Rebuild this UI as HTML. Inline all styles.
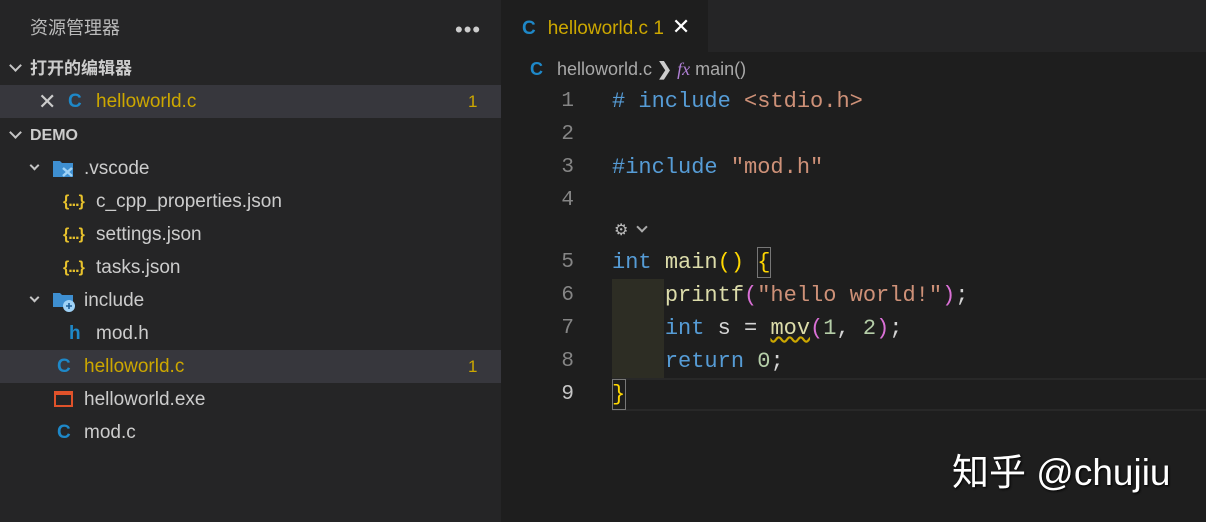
<!DOCTYPE html>
<html><head><meta charset="utf-8">
<style>
*{margin:0;padding:0;box-sizing:border-box}
body{width:1206px;height:522px;overflow:hidden;background:#1e1e1e;font-family:"Liberation Sans","Noto Sans CJK SC",sans-serif;position:relative}
#side{position:absolute;left:0;top:0;width:501px;height:522px;background:#252526}
.row{position:absolute;left:0;width:501px;height:33px;line-height:33px;font-size:19px;color:#cccccc;white-space:nowrap}
.row span{position:absolute}
.sel{background:#37373d}
.y{color:#cca700}
.cic{color:#1e88c8;font-weight:bold;font-size:19px}
.json{color:#e8c22c;font-size:16px;font-weight:bold;letter-spacing:-1px}
.chev{position:absolute;width:9px;height:9px;border-right:2px solid #c5c5c5;border-bottom:2px solid #c5c5c5;transform:rotate(45deg)}
#tabbar{position:absolute;left:501px;top:0;width:705px;height:52px;background:#252526}
#tab{position:absolute;left:501px;top:0;width:207px;height:52px;background:#1e1e1e}
.code{position:absolute;left:612px;font-family:"Liberation Mono",monospace;font-size:22px;height:33px;line-height:33px;white-space:pre;color:#d4d4d4}
.ln{position:absolute;left:540px;width:34px;text-align:right;font-family:"Liberation Mono",monospace;font-size:21px;color:#858585;height:33px;line-height:33px}
.kw{color:#569cd6}.st{color:#ce9178}.fn{color:#dcdcaa}.nu{color:#b5cea8}.br1{color:#ffd700}.br2{color:#da70d6}.pl{color:#d4d4d4}
</style></head><body>
<div id="side">
 <div class="row" style="top:12px;font-size:18px"><span style="left:30px;color:#bbbbbb">资源管理器</span><span style="left:455px;color:#ccc;font-size:22px;letter-spacing:1px;top:1px">•••</span></div>
 <div class="row" style="top:52px;font-size:17px;font-weight:bold"><i class="chev" style="left:11px;top:9px"></i><span style="left:30px;color:#cccccc">打开的编辑器</span></div>
 <div class="row sel" style="top:85px"><span style="left:38px;color:#ccc;font-size:22px">✕</span><span class="cic" style="left:68px">C</span><span class="y" style="left:96px">helloworld.c</span><span class="y" style="left:468px;font-size:17px">1</span></div>
 <div class="row" style="top:119px;font-size:16px;font-weight:bold"><i class="chev" style="left:11px;top:9px"></i><span style="left:30px">DEMO</span></div>
 <div class="row" style="top:152px"><i class="chev" style="left:31px;top:10px;width:7px;height:7px"></i>
  <svg style="position:absolute;left:52px;top:7px" width="24" height="20" viewBox="0 0 24 20"><path d="M1 2h7l2 2h11v14H1z" fill="#3e8fd1"/><path d="M11 9l9 8M20 9l-9 8" stroke="#9fd2f6" stroke-width="2.5"/></svg>
  <span style="left:84px">.vscode</span></div>
 <div class="row" style="top:185px"><span class="json" style="left:63px">{...}</span><span style="left:96px">c_cpp_properties.json</span></div>
 <div class="row" style="top:218px"><span class="json" style="left:63px">{...}</span><span style="left:96px">settings.json</span></div>
 <div class="row" style="top:251px"><span class="json" style="left:63px">{...}</span><span style="left:96px">tasks.json</span></div>
 <div class="row" style="top:284px"><i class="chev" style="left:31px;top:10px;width:7px;height:7px"></i>
  <svg style="position:absolute;left:52px;top:7px" width="24" height="22" viewBox="0 0 24 22"><path d="M1 2h7l2 2h11v12H1z" fill="#3e8fd1"/><circle cx="17" cy="15" r="6" fill="#9fd2f6"/><path d="M17 12v6M14 15h6" stroke="#1e5f99" stroke-width="1.6"/></svg>
  <span style="left:84px">include</span></div>
 <div class="row" style="top:317px"><span style="left:69px;color:#1e88c8;font-weight:bold">h</span><span style="left:96px">mod.h</span></div>
 <div class="row sel" style="top:350px"><span class="cic" style="left:57px">C</span><span class="y" style="left:84px">helloworld.c</span><span class="y" style="left:468px;font-size:17px">1</span></div>
 <div class="row" style="top:383px"><span style="left:54px;top:8px;width:19px;height:16px;border:2px solid #e0522a;border-top-width:4px"></span><span style="left:84px">helloworld.exe</span></div>
 <div class="row" style="top:416px"><span class="cic" style="left:57px">C</span><span style="left:84px">mod.c</span></div>
</div>
<div id="tabbar"></div>
<div id="tab"></div>
<div style="position:absolute;left:522px;top:12px;font-size:19px;line-height:30px;white-space:nowrap"><span class="cic">C</span><span class="y" style="margin-left:12px">helloworld.c 1</span><span style="color:#fff;margin-left:8px;font-size:22px">✕</span></div>
<div style="position:absolute;left:530px;top:55px;font-size:18px;line-height:28px;white-space:nowrap;color:#a9a9a9"><span class="cic" style="font-size:18px">C</span><span style="margin-left:14px">helloworld.c</span><span style="color:#ccc;font-weight:bold"> ❯ </span><span style="color:#b180d7;font-style:italic;font-family:'Liberation Serif',serif">fx</span> main()</div>

<div style="position:absolute;left:612px;top:279px;width:52px;height:99px;background:#2d2d24"></div>
<div style="position:absolute;left:612px;top:378px;width:594px;height:33px;border-top:2px solid #282828;border-bottom:2px solid #282828"></div>
<div style="position:absolute;left:757px;top:247px;width:14px;height:31px;border:1px solid #777"></div>
<div style="position:absolute;left:612px;top:379px;width:14px;height:31px;border:1px solid #777"></div>

<div class="ln" style="top:85px">1</div><div class="ln" style="top:118px">2</div><div class="ln" style="top:151px">3</div><div class="ln" style="top:184px">4</div>
<div class="ln" style="top:246px">5</div><div class="ln" style="top:279px">6</div><div class="ln" style="top:312px">7</div><div class="ln" style="top:345px">8</div><div class="ln" style="top:378px;color:#c6c6c6">9</div>

<div class="code" style="top:85px"><span class="kw"># include </span><span class="st">&lt;stdio.h&gt;</span></div>
<div class="code" style="top:151px"><span class="kw">#include </span><span class="st">"mod.h"</span></div>
<div style="position:absolute;left:614px;top:220px;color:#bbb;font-size:16px">⚙<span style="display:inline-block;width:8px;height:8px;border-right:2px solid #aaa;border-bottom:2px solid #aaa;transform:rotate(45deg);margin-left:10px;position:relative;top:-4px"></span></div>
<div class="code" style="top:246px"><span class="kw">int</span> <span class="fn">main</span><span class="br1">()</span> <span class="br1">{</span></div>
<div class="code" style="top:279px">    <span class="fn">printf</span><span class="br2">(</span><span class="st">"hello world!"</span><span class="br2">)</span>;</div>
<div class="code" style="top:312px">    <span class="kw">int</span> s = <span class="fn" style="text-decoration:underline wavy #cca700">mov</span><span class="br2">(</span><span class="nu">1</span>, <span class="nu">2</span><span class="br2">)</span>;</div>
<div class="code" style="top:345px">    <span class="kw">return</span> <span class="nu">0</span>;</div>
<div class="code" style="top:378px"><span class="br1">}</span></div>

<div style="position:absolute;left:952px;top:442px;font-size:37px;color:#fff;white-space:nowrap;font-family:'Liberation Sans','Noto Sans CJK SC',sans-serif;text-shadow:1px 1px 2px #000">知乎 @chujiu</div>
</body></html>
